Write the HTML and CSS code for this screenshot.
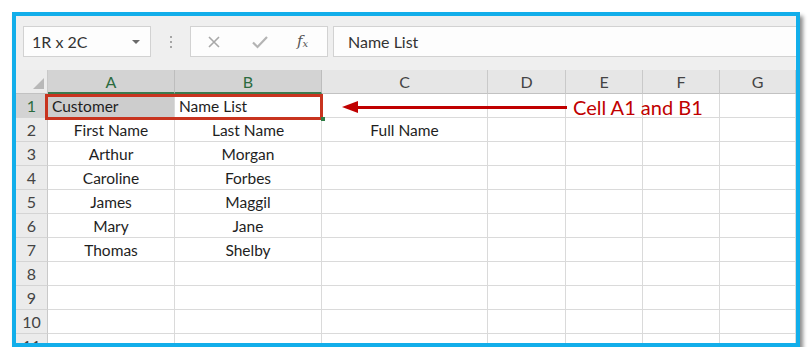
FILE: index.html
```html
<!DOCTYPE html>
<html>
<head>
<meta charset="utf-8">
<link rel="stylesheet" href="styles.css">
</head>
<body>
<div class="frame">
  <div class="toolbar">
    <div class="namebox">
      <span class="nb-text">1R x 2C</span>
      <span class="nb-arrow"></span>
    </div>
    <div class="dots"><i></i><i></i><i></i></div>
    <div class="fxbox">
      <svg class="ic-x" width="14" height="14" viewBox="0 0 14 14"><path d="M2 2 L12 12 M12 2 L2 12" stroke="#a8a8a8" stroke-width="1.6" fill="none"/></svg>
      <svg class="ic-check" width="18" height="14" viewBox="0 0 18 14"><path d="M2 7.5 L6.5 12 L16 2" stroke="#b4b4b4" stroke-width="2.2" fill="none"/></svg>
      <span class="ic-fx">f<sub>x</sub></span>
    </div>
    <div class="formula">Name List</div>
  </div>
  <div class="sheet">
    <div class="grid">
      <div class="h corner"><span class="tri"></span></div>
      <div class="h sel">A</div>
      <div class="h sel">B</div>
      <div class="h">C</div>
      <div class="h">D</div>
      <div class="h">E</div>
      <div class="h">F</div>
      <div class="h">G</div>

      <div class="rh rsel">1</div>
      <div class="c left active">Customer</div>
      <div class="c left">Name List</div>
      <div class="c"></div><div class="c"></div><div class="c"></div><div class="c"></div><div class="c"></div>

      <div class="rh">2</div>
      <div class="c">First Name</div><div class="c">Last Name</div><div class="c">Full Name</div>
      <div class="c"></div><div class="c"></div><div class="c"></div><div class="c"></div>

      <div class="rh">3</div>
      <div class="c">Arthur</div><div class="c">Morgan</div><div class="c"></div>
      <div class="c"></div><div class="c"></div><div class="c"></div><div class="c"></div>

      <div class="rh">4</div>
      <div class="c">Caroline</div><div class="c">Forbes</div><div class="c"></div>
      <div class="c"></div><div class="c"></div><div class="c"></div><div class="c"></div>

      <div class="rh">5</div>
      <div class="c">James</div><div class="c">Maggil</div><div class="c"></div>
      <div class="c"></div><div class="c"></div><div class="c"></div><div class="c"></div>

      <div class="rh">6</div>
      <div class="c">Mary</div><div class="c">Jane</div><div class="c"></div>
      <div class="c"></div><div class="c"></div><div class="c"></div><div class="c"></div>

      <div class="rh">7</div>
      <div class="c">Thomas</div><div class="c">Shelby</div><div class="c"></div>
      <div class="c"></div><div class="c"></div><div class="c"></div><div class="c"></div>

      <div class="rh">8</div>
      <div class="c"></div><div class="c"></div><div class="c"></div>
      <div class="c"></div><div class="c"></div><div class="c"></div><div class="c"></div>

      <div class="rh">9</div>
      <div class="c"></div><div class="c"></div><div class="c"></div>
      <div class="c"></div><div class="c"></div><div class="c"></div><div class="c"></div>

      <div class="rh">10</div>
      <div class="c"></div><div class="c"></div><div class="c"></div>
      <div class="c"></div><div class="c"></div><div class="c"></div><div class="c"></div>

      <div class="rh">11</div>
      <div class="c"></div><div class="c"></div><div class="c"></div>
      <div class="c"></div><div class="c"></div><div class="c"></div><div class="c"></div>
    </div>
    <div class="highlight"><span class="handle"></span></div>
    <div class="callout">
      <span class="arrow"><span class="head"></span><span class="line"></span></span>
      <span class="label">Cell A1 and B1</span>
    </div>
  </div>
</div>
</body>
</html>
```

FILE: styles.css
```css
html, body {
  margin: 0;
  padding: 0;
  background: #ffffff;
}
body {
  font-family: Lato, "Open Sans", sans-serif;
  color: #222;
}
.frame {
  margin: 12px 0 0 12px;
  width: 788px;
  height: 335px;
  box-sizing: border-box;
  border: 4px solid #12aeea;
  box-shadow: 3px 4px 4px rgba(0, 0, 0, 0.45);
  background: #f0f0f0;
  overflow: hidden;
  display: flex;
  flex-direction: column;
}
.toolbar {
  height: 54px;
  flex: none;
  display: flex;
  align-items: flex-start;
  padding: 10px 0 0 7px;
  box-sizing: border-box;
  background: #efefef;
}
.namebox {
  width: 128px;
  height: 31px;
  box-sizing: border-box;
  background: #fdfdfd;
  border: 1px solid #d2d2d2;
  display: flex;
  align-items: center;
  padding-left: 8px;
  position: relative;
}
.nb-text {
  font-size: 16px;
  color: #333;
  flex: 1;
}
.nb-arrow {
  width: 0;
  height: 0;
  border-left: 4px solid transparent;
  border-right: 4px solid transparent;
  border-top: 4px solid #6a6a6a;
  margin-right: 10px;
}
.dots {
  width: 39px;
  height: 31px;
  display: flex;
  flex-direction: column;
  align-items: center;
  justify-content: center;
  gap: 3px;
}
.dots i {
  display: block;
  width: 2px;
  height: 2px;
  background: #a5a5a5;
}
.fxbox {
  width: 138px;
  height: 31px;
  box-sizing: border-box;
  background: #fdfdfd;
  border: 1px solid #d2d2d2;
  display: flex;
  align-items: center;
  padding-left: 16px;
}
.ic-x { margin-right: 30px; }
.ic-check { margin-right: 28px; }
.ic-fx {
  font-family: "DejaVu Serif", "Liberation Serif", serif;
  font-style: italic;
  font-size: 15px;
  color: #555;
  line-height: 1;
}
.ic-fx sub {
  font-size: 10px;
  vertical-align: baseline;
  position: relative;
  top: 1px;
}
.formula {
  flex: 1;
  margin-left: 5px;
  height: 31px;
  box-sizing: border-box;
  background: #fdfdfd;
  border: 1px solid #d2d2d2;
  border-right: none;
  font-size: 16px;
  color: #333;
  display: flex;
  align-items: center;
  padding-left: 14px;
}
.sheet {
  position: relative;
  flex: 1;
  overflow: hidden;
  background: #fff;
}
.grid {
  display: grid;
  grid-template-columns: 32px 127px 147px 166px 78px 77px 77px 1fr;
  grid-auto-rows: 24px;
}
.grid > div {
  box-sizing: border-box;
  display: flex;
  align-items: center;
  justify-content: center;
  font-size: 15.5px;
  white-space: nowrap;
}
.h {
  background: #e6e6e6;
  border-right: 1px solid #c9c9c9;
  border-bottom: 1px solid #c2c2c2;
  color: #444;
}
.grid > .h, .grid > .rh {
  font-size: 16px;
}
.h.sel {
  background: #d3d3d3;
  color: #2b6b3f;
  border-bottom: 2px solid #3d7a4f;
  border-right-color: #bdbdbd;
}
.corner {
  background: #ececec;
  position: relative;
}
.tri {
  position: absolute;
  right: 3px;
  bottom: 4px;
  width: 0;
  height: 0;
  border-left: 11px solid transparent;
  border-bottom: 11px solid #b8b8b8;
}
.rh {
  background: #ebebeb;
  border-right: 1px solid #c9c9c9;
  border-bottom: 1px solid #d4d4d4;
  color: #444;
}
.rh.rsel {
  background: #d3d3d3;
  color: #2b6b3f;
}
.c {
  background: #fff;
  border-right: 1px solid #dadada;
  border-bottom: 1px solid #dadada;
  color: #1e1e1e;
}
.c.left {
  justify-content: flex-start;
  padding-left: 4px;
}
.c.active {
  background: #cdcdcd;
}
.highlight {
  position: absolute;
  left: 29px;
  top: 24px;
  width: 278px;
  height: 26px;
  box-sizing: border-box;
  border: 3px solid #c8341f;
}
.handle {
  position: absolute;
  right: -5px;
  bottom: -4px;
  width: 4px;
  height: 4px;
  background: #2f7d45;
}
.callout {
  position: absolute;
  left: 326px;
  top: 25px;
  height: 24px;
  display: flex;
  align-items: center;
}
.arrow {
  display: flex;
  align-items: center;
  width: 225px;
}
.head {
  width: 0;
  height: 0;
  border-top: 6px solid transparent;
  border-bottom: 6px solid transparent;
  border-right: 16px solid #c00000;
}
.line {
  flex: 1;
  height: 3px;
  background: #c00000;
}
.label {
  margin-left: 6px;
  font-size: 20px;
  color: #c00000;
  line-height: 24px;
}
```
